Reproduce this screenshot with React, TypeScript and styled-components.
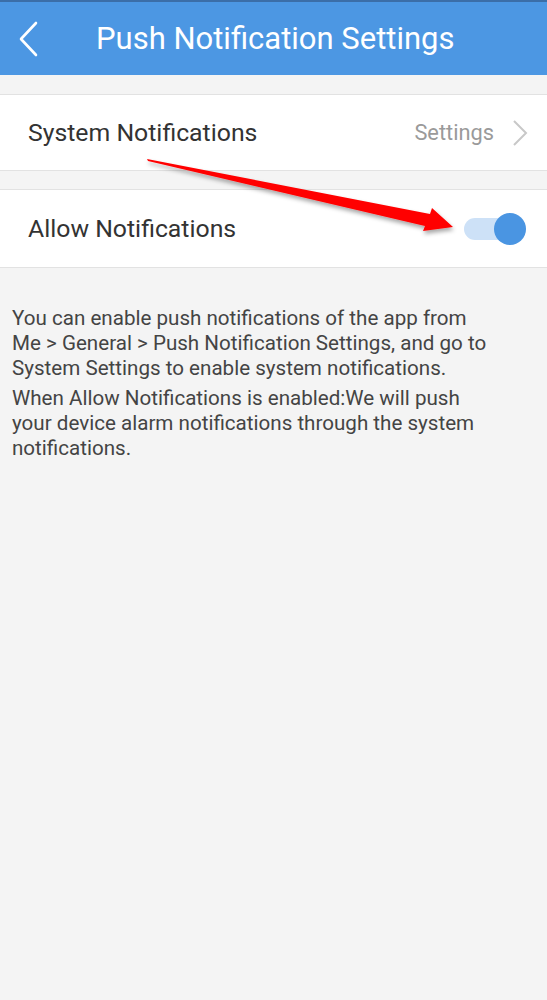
import styled, { createGlobalStyle } from "styled-components"

const GlobalStyle = createGlobalStyle`
  html, body {
    margin: 0;
    padding: 0;
    background: #f4f4f4;
  }
  body {
    font-family: Roboto, "Noto Sans", sans-serif;
  }
`

export default function App() {
  return (
    <>
      <GlobalStyle />
      <Page>
        <Header>
          <BackButton aria-label="Back">
            <svg width="22" height="36" viewBox="0 0 22 36">
              <path d="M18 2 L3 18 L18 34" fill="none" stroke="#fff" strokeWidth="2.6" strokeLinecap="round" strokeLinejoin="round" />
            </svg>
          </BackButton>
          <Title>Push Notification Settings</Title>
        </Header>

        <Group $top={19}>
          <Row $height={75}>
            <Label>System Notifications</Label>
            <Trailing>
              <Hint>Settings</Hint>
              <svg width="16" height="28" viewBox="0 0 16 28">
                <path d="M2 2 L14 14 L2 26" fill="none" stroke="#c8c8c8" strokeWidth="2" />
              </svg>
            </Trailing>
          </Row>
        </Group>

        <Group $top={18}>
          <Row $height={77}>
            <Label>Allow Notifications</Label>
            <Switch $on>
              <Knob />
            </Switch>
          </Row>
        </Group>

        <Notes>
          <p>You can enable push notifications of the app from Me &gt; General &gt; Push Notification Settings, and go to System Settings to enable system notifications.</p>
          <p>When Allow Notifications is enabled:We will push your device alarm notifications through the system notifications.</p>
        </Notes>

        {/* red callout arrow drawn over the rows */}
        <Arrow width="547" height="260" viewBox="0 0 547 260">
          <defs>
            <filter id="shade" x="-10%" y="-50%" width="120%" height="200%">
              <feDropShadow dx="1" dy="3" stdDeviation="2" floodColor="#000" floodOpacity="0.35" />
            </filter>
          </defs>
          <polygon
            points="147,159 148,161 425,226 423,231 453,227 432,208 430,214"
            fill="#ff0000"
            filter="url(#shade)"
          />
        </Arrow>
      </Page>
    </>
  )
}

const Page = styled.div`
  position: relative;
  min-height: 1000px;
  background: #f4f4f4;
`

const Header = styled.header`
  height: 73px;
  border-top: 2px solid #3b6ea8;
  background: #4c97e3;
  display: flex;
  align-items: center;
  padding-left: 18px;
`

const BackButton = styled.div`
  width: 22px;
  height: 36px;
  display: flex;
  margin-top: 1px;
`

const Title = styled.h1`
  margin: 0 0 0 56px;
  color: #fff;
  font-size: 31px;
  font-weight: 400;
`

const Group = styled.section<{ $top: number }>`
  margin-top: ${p => p.$top}px;
  background: #fff;
  border-top: 1px solid #e2e2e2;
  border-bottom: 1px solid #e2e2e2;
`

const Row = styled.div<{ $height: number }>`
  height: ${p => p.$height}px;
  display: flex;
  align-items: center;
  justify-content: space-between;
  padding: 0 20px 0 28px;
`

const Label = styled.span`
  font-size: 24.8px;
  color: #333;
`

const Trailing = styled.div`
  display: flex;
  align-items: center;
  gap: 18px;
  margin-right: -1px;
`

const Hint = styled.span`
  font-size: 21.8px;
  color: #9a9a9a;
`

const Switch = styled.div<{ $on?: boolean }>`
  position: relative;
  width: 61px;
  height: 22px;
  border-radius: 11px;
  background: ${p => (p.$on ? "#cde1f7" : "#e0e0e0")};
  display: flex;
  align-items: center;
  justify-content: ${p => (p.$on ? "flex-end" : "flex-start")};
  margin-right: 2px;
`

const Knob = styled.span`
  width: 32px;
  height: 32px;
  border-radius: 50%;
  background: #4a95e2;
  margin-right: -1px;
`

const Notes = styled.div`
  max-width: 478px;
  padding: 38px 12px 0 12px;
  color: #444;
  font-size: 20.6px;
  line-height: 25px;

  p {
    margin: 0 0 5px 0;
  }
`

const Arrow = styled.svg`
  position: absolute;
  left: 0;
  top: 0;
  pointer-events: none;
`
